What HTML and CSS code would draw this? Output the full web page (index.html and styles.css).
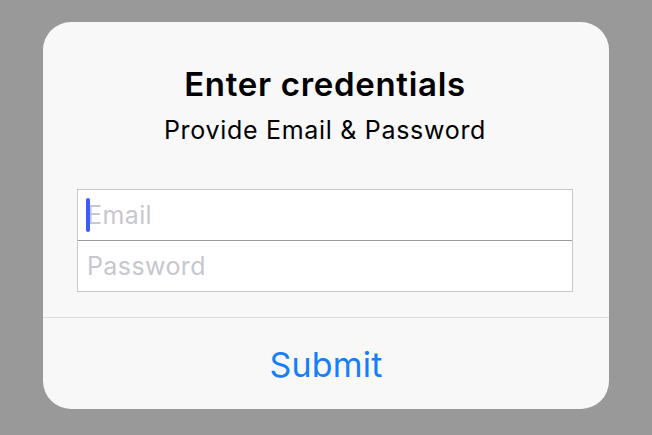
FILE: index.html
```html
<!DOCTYPE html>
<html lang="en">
<head>
    <meta charset="UTF-8">
    <meta name="viewport" content="width=device-width, initial-scale=1.0">
    <title>Enter credentials</title>
    <link rel="stylesheet" href="styles.css">
</head>
<body>

<div class="alert">
    <div class="alert-body">
        <h1 class="alert-title">Enter credentials</h1>
        <p class="alert-message">Provide Email &amp; Password</p>
        <div class="fields">
            <div class="field">
                <input type="email" placeholder="Email">
                <span class="caret"></span>
            </div>
            <div class="field">
                <input type="password" placeholder="Password">
            </div>
        </div>
    </div>
    <button class="alert-action">Submit</button>
</div>

</body>
</html>
```

FILE: styles.css
```css
/* Fondo gris con la alerta encima */
body {
    margin: 0;
    background-color: #999999;
    font-family: 'Inter', 'Roboto', sans-serif;
}
.alert {
    width: 566px;
    margin: 22px 0 0 43px;
    background-color: #f8f8f8;
    border-radius: 28px;
    overflow: hidden;
}
.alert-body {
    padding: 42px 36px 25px 34px;
    text-align: center;
}
.alert-title {
    margin: 0;
    font-size: 33px;
    line-height: 40px;
    font-weight: 600;
    letter-spacing: 0.7px;
    color: #000;
}
.alert-message {
    margin: 11px 0 0;
    font-size: 25px;
    line-height: 30px;
    letter-spacing: 0.7px;
    color: #000;
}
.fields {
    margin-top: 44px;
    border: 1px solid #c8c8c8;
    background-color: #fff;
}
.field {
    position: relative;
    height: 50px;
}
.field + .field {
    border-top: 1px solid #9a9a9a;
}
.field input {
    width: 100%;
    height: 100%;
    box-sizing: border-box;
    border: none;
    outline: none;
    padding: 0 9px;
    font-family: inherit;
    font-size: 25px;
    letter-spacing: 0.4px;
    background: transparent;
}
.field input::placeholder {
    color: #c7c7cd;
}
.caret {
    position: absolute;
    left: 8px;
    top: 8px;
    width: 4px;
    height: 34px;
    border-radius: 2px;
    background-color: #3b5cf5;
}
.alert-action {
    display: block;
    width: 100%;
    height: 92px;
    padding: 2px 0 0;
    border: none;
    border-top: 1px solid #dcdcdc;
    background: transparent;
    font-family: inherit;
    font-size: 34px;
    letter-spacing: 0.2px;
    color: #157efb;
    cursor: pointer;
}
```
